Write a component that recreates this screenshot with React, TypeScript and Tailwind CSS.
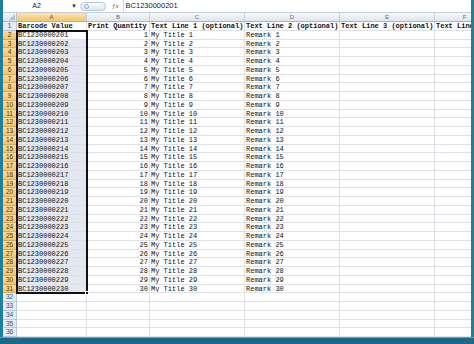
import React from 'react'

const colWidths = ['w-[70px]', 'w-[63px]', 'w-[95px]', 'w-[95px]', 'w-[95px]', 'w-[60px]']
const colLetters = ['A', 'B', 'C', 'D', 'E', 'F']
const headers = ['Barcode Value', 'Print Quantity', 'Text Line 1 (optional)', 'Text Line 2 (optional)', 'Text Line 3 (optional)', 'Text Line 4 (optional)']

const rows = Array.from({ length: 37 }, (_, i) => i + 1)

function cellText(r: number, c: number): string {
  if (r === 1) return headers[c]
  const n = r - 1
  if (n > 30) return ''
  if (c === 0) return `BC${1230000200 + n}`
  if (c === 1) return String(n)
  if (c === 2) return `My Title ${n}`
  if (c === 3) return `Remark ${n}`
  return ''
}

export default function App() {
  return (
    <div className="w-[474px] h-[344px] bg-[#1f7f9d] px-[3px] flex flex-col overflow-hidden font-['Liberation_Mono',monospace]">
      <div className="flex-1 bg-white flex flex-col overflow-hidden">
        {/* Formula bar */}
        <div className="h-[13px] flex items-center border-b border-[#c5cfdb] bg-white font-['Liberation_Sans',Arial,sans-serif] text-[7px] text-[#222]">
          <div className="w-[67px] text-center">A2</div>
          <div className="text-[6px] text-[#333] ml-[1px]">▼</div>
          <div className="ml-[3px] h-[9px] w-[26px] rounded-full border border-[#b9c6d6] bg-linear-to-b from-[#fafcff] to-[#dde6f0] flex items-center pl-[3px]">
            <div className="w-[5px] h-[5px] rounded-full border border-[#8ea3bd]" />
          </div>
          <div className="ml-[6px] italic text-[7px] text-[#555] font-['Liberation_Serif',serif]">ƒx</div>
          <div className="ml-[4px] h-full border-l border-[#d0d7e0]" />
          <div className="ml-[2px] text-[7.5px]">BC1230000201</div>
        </div>

        {/* Column headers */}
        <div className="h-[9px] flex shrink-0 border-b border-[#9eb6ce]">
          <div className="w-[14px] shrink-0 bg-linear-to-b from-[#f3f6fa] to-[#dce3ec] border-r border-[#b7c5d6] flex items-end justify-end">
            <div className="w-0 h-0 border-l-[6px] border-l-transparent border-b-[6px] border-b-[#b4c0cf] mb-[1px] mr-[1px]" />
          </div>
          {colLetters.map((l, c) => (
            <div
              key={l}
              className={`${colWidths[c]} shrink-0 border-r border-[#c3cedb] flex items-center justify-center text-[6px] leading-none font-['Liberation_Sans',Arial,sans-serif] ${
                c === 0 ? 'bg-linear-to-b from-[#fbe3b0] to-[#f3c46d] text-[#5a4a2a]' : 'bg-linear-to-b from-[#f6f8fb] to-[#dfe6ee] text-[#5b6b85]'
              }`}
            >
              {l}
            </div>
          ))}
        </div>

        {/* Grid body */}
        <div className="relative flex-1 overflow-hidden">
          {rows.map((r) => {
            const selected = r >= 2 && r <= 31
            return (
              <div key={r} className="flex h-[8.75px] text-[7px] leading-[8.75px] text-[#111]">
                <div
                  className={`w-[14px] shrink-0 border-r border-b font-['Liberation_Sans',Arial,sans-serif] text-[6.5px] text-center ${
                    selected
                      ? 'bg-linear-to-b from-[#f9dc9c] to-[#f3c46a] border-[#d7ab5a] text-[#4a3b1e]'
                      : 'bg-[#e4ebf5] border-[#b7c6d8] text-[#34507a]'
                  }`}
                >
                  {r}
                </div>
                {colWidths.map((w, c) => {
                  const txt = cellText(r, c)
                  const fill = c === 0 && r >= 3 && r <= 31 ? 'bg-[#e3e8f2]' : 'bg-white'
                  return (
                    <div
                      key={c}
                      className={`${w} shrink-0 border-r border-b border-[#dde1e6] whitespace-nowrap overflow-hidden ${fill} ${
                        c === 1 && r > 1 ? 'text-right pr-[1px]' : 'pl-[1px]'
                      } ${r === 1 ? 'font-bold' : ''}`}
                    >
                      {txt}
                    </div>
                  )
                })}
              </div>
            )
          })}
          {/* Selection border A2:A31 */}
          <div className="absolute left-[13px] top-[7.75px] w-[72px] h-[264px] border-2 border-[#111]">
            <div className="absolute -right-[3px] -bottom-[3px] w-[4px] h-[4px] bg-[#111] border border-white" />
          </div>
        </div>
      </div>
      <div className="h-[7px] shrink-0 bg-[#1a6a86] border-t border-[#5aa7c0] -mx-[3px]" />
    </div>
  )
}
